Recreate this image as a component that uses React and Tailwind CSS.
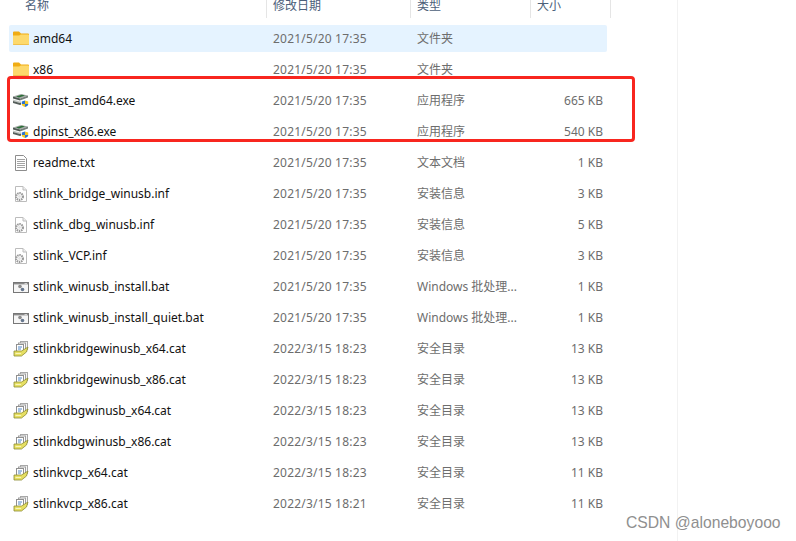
const FONT = "font-['Noto_Sans','Noto_Sans_CJK_SC',sans-serif]";

function Folder() {
  return (
    <svg width="16" height="16" viewBox="0 1 16 16">
      <path d="M0 2.5 a1 1 0 0 1 1-1 h5 l2 2 H15 a1 1 0 0 1 1 1 V7 H0z" fill="#f0ac14" />
      <path d="M0 5.6 h6.2 l1.6-1.2 H15 a1 1 0 0 1 1 1 V14 a1 1 0 0 1-1 1 H1 a1 1 0 0 1-1-1z" fill="#fdd96c" />
      <path d="M0 14 h16 v.2 a.8.8 0 0 1-.8.8 H.8 a.8.8 0 0 1-.8-.8z" fill="#f0c04c" />
    </svg>
  );
}

function Exe() {
  return (
    <svg width="16" height="16" viewBox="0 1 16 16">
      <path d="M0 4.5 L8 2 L15 3.5 L7 6.5z" fill="#a3a9a5" />
      <path d="M3 4.4 L9 2.8 L12 3.6 L6 5.4z" fill="#2c6e38" />
      <path d="M0 4.5 L7 6.5 V8.5 L0 6.5z" fill="#4f5954" />
      <path d="M7 6.5 L15 3.5 V5.5 L7 8.5z" fill="#757e79" />
      <path d="M0 7.5 L7 9.5 L9 9 V10.5 L7 11 L0 9z" fill="#c2c6c3" />
      <path d="M0 9 L7 11 L8.5 10.6 V12.6 L7 13 L0 11z" fill="#565f5b" />
      <path d="M8 9 L12 7.8 L16 9 V12.5 C16 14 14 15 12 15.8 C10 15 8 14 8 12.5z" fill="#fff" />
      <path d="M8.8 9.5 L12 8.6 V12 H8.8z" fill="#2e75cf" />
      <path d="M12 8.6 L15.2 9.5 V12 H12z" fill="#f6c91f" />
      <path d="M8.8 12 H12 V15 C10.4 14.4 8.8 13.6 8.8 12.4z" fill="#f6c91f" />
      <path d="M12 12 H15.2 V12.4 C15.2 13.6 13.6 14.4 12 15z" fill="#2e75cf" />
    </svg>
  );
}

function Txt() {
  return (
    <svg width="16" height="16" viewBox="0 0 16 16">
      <path d="M2.5 .5 H10.5 L13.5 3.5 V15.5 H2.5z" fill="#fff" stroke="#8d8d8d" />
      <path d="M4 4.5 H12 M4 6.5 H12 M4 8.5 H12 M4 10.5 H12 M4 12.5 H12" stroke="#a3a3a3" />
    </svg>
  );
}

function Inf() {
  return (
    <svg width="16" height="16" viewBox="0 0 16 16">
      <path d="M2.5 .5 H10 L13.5 4 V15.5 H2.5z" fill="#fff" stroke="#bcbcbc" />
      <path d="M10 .5 V4 H13.5" fill="#eeeeee" stroke="#bcbcbc" />
      <circle cx="6.5" cy="10.5" r="3.4" fill="none" stroke="#9a9a9a" strokeWidth="2.2" strokeDasharray="1.5 .7" />
      <circle cx="6.5" cy="10.5" r="1.4" fill="#e2e2e2" />
    </svg>
  );
}

function Bat() {
  return (
    <svg width="16" height="16" viewBox="0 0 16 16">
      <rect x=".5" y="3.5" width="15" height="10" fill="#f6f6f6" stroke="#777777" />
      <rect x="1" y="4" width="14" height="1.4" fill="#8a8a8a" />
      <rect x="11.5" y="4.2" width="2.5" height="1" fill="#e4e4e4" />
      <circle cx="7" cy="7.5" r="1.8" fill="#8c8c8c" />
      <circle cx="9.5" cy="10.5" r="1.8" fill="#66778e" />
    </svg>
  );
}

function Cat() {
  return (
    <svg width="16" height="16" viewBox="0 0 16 16">
      <rect x="7.5" y=".5" width="7" height="8" fill="#f4f4f4" stroke="#a8a8a8" />
      <rect x="5.5" y="2" width="7" height="8" fill="#fff" stroke="#a0a0a0" />
      <rect x="3.5" y="3.5" width="7" height="8" fill="#fff" stroke="#909090" />
      <path d="M5 6 H9 M5 8 H8" stroke="#4f86c6" />
      <path d="M1 10 L8.5 10 L15 6 L13.5 11 L8.5 15 H1z" fill="#e6df62" stroke="#8b8a33" strokeWidth=".8" />
      <path d="M2.5 12.5 H8" stroke="#f9f5b8" />
    </svg>
  );
}

const D1 = "2021/5/20 17:35";
const rows = [
  [Folder, "amd64", D1, "文件夹", ""],
  [Folder, "x86", D1, "文件夹", ""],
  [Exe, "dpinst_amd64.exe", D1, "应用程序", "665 KB"],
  [Exe, "dpinst_x86.exe", D1, "应用程序", "540 KB"],
  [Txt, "readme.txt", D1, "文本文档", "1 KB"],
  [Inf, "stlink_bridge_winusb.inf", D1, "安装信息", "3 KB"],
  [Inf, "stlink_dbg_winusb.inf", D1, "安装信息", "5 KB"],
  [Inf, "stlink_VCP.inf", D1, "安装信息", "3 KB"],
  [Bat, "stlink_winusb_install.bat", D1, "Windows 批处理...", "1 KB"],
  [Bat, "stlink_winusb_install_quiet.bat", D1, "Windows 批处理...", "1 KB"],
  [Cat, "stlinkbridgewinusb_x64.cat", "2022/3/15 18:23", "安全目录", "13 KB"],
  [Cat, "stlinkbridgewinusb_x86.cat", "2022/3/15 18:23", "安全目录", "13 KB"],
  [Cat, "stlinkdbgwinusb_x64.cat", "2022/3/15 18:23", "安全目录", "13 KB"],
  [Cat, "stlinkdbgwinusb_x86.cat", "2022/3/15 18:23", "安全目录", "13 KB"],
  [Cat, "stlinkvcp_x64.cat", "2022/3/15 18:23", "安全目录", "11 KB"],
  [Cat, "stlinkvcp_x86.cat", "2022/3/15 18:21", "安全目录", "11 KB"],
];

export default function App() {
  return (
    <div className={`${FONT} relative w-[796px] h-[541px] overflow-hidden bg-white text-[12px]`}>
      <div className="absolute left-[677px] top-0 bottom-0 w-px bg-[#f2f2f2]" />

      <div className="flex h-[18px] items-start text-[#4c607a] leading-[11px]">
        <div className="w-[267px] h-full pl-[25px] border-r border-[#e5e5e5]">名称</div>
        <div className="w-[144px] h-full pl-[6px] border-r border-[#e5e5e5]">修改日期</div>
        <div className="w-[120px] h-full pl-[6px] border-r border-[#e5e5e5]">类型</div>
        <div className="w-[80px] h-full pl-[6px] border-r border-[#e5e5e5]">大小</div>
      </div>

      <div className="mt-[7px] ml-[9px] w-[598px] flex flex-col gap-[4px]">
        {rows.map(([Icon, name, date, type, size], i) => (
          <div
            key={name}
            className={`grid grid-cols-[264px_144px_110px_80px] items-center h-[27px] rounded-[2px] ${i === 0 ? "bg-[#e5f3ff]" : ""}`}
          >
            <div className="flex items-center pl-[4px] text-[#111111] whitespace-nowrap">
              <span className="w-[20px] flex-none"><Icon /></span>
              <span>{name}</span>
            </div>
            <div className="text-[#6d6d6d] tracking-[0.2px]">{date}</div>
            <div className="text-[#6d6d6d] whitespace-nowrap">{type}</div>
            <div className="text-[#6d6d6d] text-right pr-[4px]">{size}</div>
          </div>
        ))}
      </div>

      <div className="absolute left-[7px] top-[76px] w-[628px] h-[66px] border-[3px] border-[#f8261f] rounded-[4px]" />
      <div className="absolute left-[626px] top-[514px] font-['Liberation_Sans',sans-serif] text-[15.7px] leading-[18px] text-[#8f8f8f] whitespace-nowrap">CSDN @aloneboyooo</div>
    </div>
  );
}
